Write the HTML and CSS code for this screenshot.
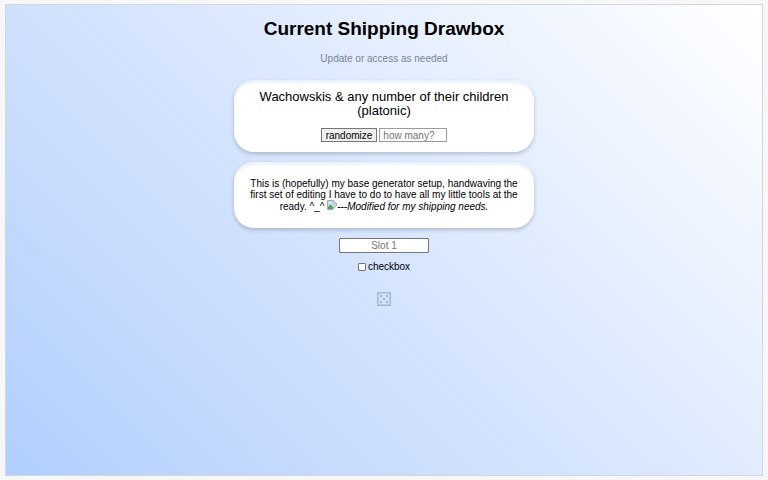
FILE: index.html
```
<!DOCTYPE html>
<html lang="en">
<head>
    <meta charset="UTF-8">
    <meta name="viewport" content="width=device-width, initial-scale=1.0">
    <title>Current Shipping Drawbox</title>
    <link rel="stylesheet" href="styles.css">
</head>
<body>

    <main class="page">
        <h1>Current Shipping Drawbox</h1>
        <p class="subtitle">Update or access as needed</p>

        <!-- Generator output -->
        <section class="card output-card">
            <div class="output">Wachowskis &amp; any number of their children (platonic)</div>
            <div class="controls">
                <button type="button">randomize</button>
                <input type="text" class="amount" placeholder="how many?" aria-label="how many?">
            </div>
        </section>

        <section class="card about-card">
            This is (hopefully) my base generator setup, handwaving the first set of editing I have to do to have all my little tools at the ready. ^_^
            <svg class="missing-image" viewBox="0 0 10 10" aria-hidden="true">
                <path d="M0.5 9.5V0.5H6.5L9.5 3.5V5.5L5.5 9.5Z" fill="#c3d9fb" stroke="#a3a8b0"/>
                <path d="M1 9V7L3.5 4.5L6.5 7.5L5.2 9Z" fill="#4eac48"/>
                <path d="M2 3.5C2 2 4.5 2 5 3.5Z" fill="#fff"/>
                <path d="M6.5 0.5V3.5H9.5Z" fill="#fff" stroke="#a3a8b0" stroke-width="0.6"/>
            </svg><em>---Modified for my shipping needs.</em>
        </section>

        <input type="text" class="slot" placeholder="Slot 1" aria-label="Slot 1">

        <div class="option">
            <input type="checkbox" id="option">
            <label for="option">checkbox</label>
        </div>

        <!-- Five-pip die -->
        <svg class="die" viewBox="0 0 14 14" aria-hidden="true">
            <rect x="0.8" y="0.8" width="12.4" height="12.4" fill="none" stroke="currentColor" stroke-width="1.5"/>
            <circle cx="4" cy="4" r="1.2"/>
            <circle cx="10" cy="4" r="1.2"/>
            <circle cx="7" cy="7" r="1.2"/>
            <circle cx="4" cy="10" r="1.2"/>
            <circle cx="10" cy="10" r="1.2"/>
        </svg>
    </main>

</body>
</html>
```

FILE: styles.css
```
* {
    box-sizing: border-box;
}

body {
    margin: 0;
    padding: 4px 5px;
    min-height: 100vh;
    display: flex;
    background-color: #f7f7f7;
    font-family: "Liberation Sans", Arial, sans-serif;
    font-size: 10px;
    line-height: 11px;
    color: #000;
}

.page {
    flex: 1;
    display: flex;
    flex-direction: column;
    align-items: center;
    padding: 12px;
    border: 1px solid #d3d7de;
    background: linear-gradient(45deg, #b0cffe, #c9dcfd 30%, #dfebfe 60%, #fff);
    text-align: center;
}

h1 {
    margin: 0;
    font-size: 19px;
    line-height: 23px;
}

.subtitle {
    margin: 13px 0 16px;
    color: #7c8594;
}

.card {
    width: 300px;
    max-width: 100%;
    margin-bottom: 10px;
    border-radius: 20px;
    background-color: #fff;
    box-shadow: 0 2px 4px rgba(0, 0, 0, 0.2), inset 0 3px 2px #eaf3ff;
}

.output-card {
    padding: 10px 16px;
}

.output {
    margin-bottom: 10px;
    font-size: 13px;
    line-height: 14px;
}

.controls {
    display: flex;
    justify-content: center;
    gap: 2px;
}

button,
input {
    margin: 0;
    font-family: inherit;
    font-size: 10px;
    line-height: 11px;
}

button {
    height: 14px;
    padding: 0 4px;
    border: 1px solid #767676;
    background-color: #efefef;
    color: #000;
}

.amount {
    width: 68px;
    height: 14px;
    padding: 0 3px;
    border: 1px solid #9a9a9a;
}

.about-card {
    padding: 16px;
}

.missing-image {
    width: 10px;
    height: 10px;
}

.slot {
    width: 90px;
    height: 15px;
    padding: 0 2px;
    border: 1px solid #767676;
    border-radius: 1px;
    text-align: center;
}

.option {
    display: flex;
    align-items: center;
    gap: 2px;
    margin: 8px 0 20px;
}

.option input {
    appearance: none;
    width: 8px;
    height: 8px;
    border: 1px solid #767676;
    border-radius: 1px;
    background-color: #fff;
}

.option input:checked {
    background-color: #0075ff;
}

.die {
    width: 14px;
    height: 14px;
    color: #a7b5cd;
    fill: currentColor;
}
```
